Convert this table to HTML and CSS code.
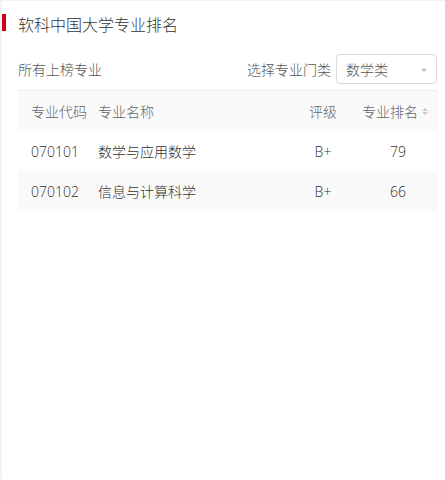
FILE: index.html
```html
<!DOCTYPE html>
<html lang="zh">
<head>
<meta charset="utf-8">
<link rel="stylesheet" href="styles.css">
</head>
<body>
<div class="card">
  <div class="title">软科中国大学专业排名</div>
  <div class="toolbar">
    <span class="all">所有上榜专业</span>
    <div class="filter">
      <span class="label">选择专业门类</span>
      <div class="select"><span>数学类</span><span class="arrow"></span></div>
    </div>
  </div>
  <div class="table">
    <div class="row head">
      <div class="c code">专业代码</div>
      <div class="c name">专业名称</div>
      <div class="c grade">评级</div>
      <div class="c rank">专业排名<span class="sort"><i class="up"></i><i class="down"></i></span></div>
    </div>
    <div class="row">
      <div class="c code">070101</div>
      <div class="c name">数学与应用数学</div>
      <div class="c grade">B+</div>
      <div class="c rank">79</div>
    </div>
    <div class="row alt">
      <div class="c code">070102</div>
      <div class="c name">信息与计算科学</div>
      <div class="c grade">B+</div>
      <div class="c rank">66</div>
    </div>
  </div>
</div>
</body>
</html>
```

FILE: styles.css
```css
html, body { margin: 0; padding: 0; }
body {
  background: #f3f3f3;
  font-family: "Open Sans", "Noto Sans CJK SC", sans-serif;
  font-weight: 300;
  color: #333;
  width: 445px;
  height: 480px;
  overflow: hidden;
}
.card {
  background: #fff;
  margin: 1px 0 0 2px;
  height: 479px;
  border-radius: 0 0 0 3px;
  padding: 0 8px 0 16px;
}
.title {
  position: relative;
  padding-top: 12px;
  height: 24px;
  line-height: 24px;
  font-size: 16px;
  color: #333;
}
.title::before {
  content: "";
  position: absolute;
  left: -16px;
  top: 13px;
  width: 4px;
  height: 17px;
  background: #d0021b;
}
.toolbar {
  margin-top: 16px;
  height: 32px;
  display: flex;
  align-items: center;
  justify-content: space-between;
  font-size: 14px;
  color: #555;
}
.filter { display: flex; align-items: center; gap: 5px; }
.select {
  border: 1px solid #d9d9d9;
  border-radius: 4px;
  display: flex;
  align-items: center;
  justify-content: space-between;
  padding: 0 9px 0 9px;
  box-sizing: border-box;
  width: 101px;
  height: 30px;
  color: #555;
}
.arrow {
  width: 0; height: 0;
  border-left: 3px solid transparent;
  border-right: 3px solid transparent;
  border-top: 3px solid #bbb;
  margin-top: 2px;
}
.table {
  margin-top: 5px;
  border-top: 1px solid #ececec;
  font-size: 14px;
}
.row {
  display: grid;
  grid-template-columns: 80px 1fr 60px 78px;
  height: 40px;
  align-items: center;
  color: #333;
}
.row.head { background: #fafafa; color: #666; }
.row.alt { background: #f9f9f9; }
.c.code { padding-left: 13px; }
.c.grade { text-align: center; padding-right: 12px; }
.c.rank { text-align: center; }
.row.head .c.rank { text-align: left; display: flex; align-items: center; padding-left: 3px; }
.sort {
  display: inline-flex;
  flex-direction: column;
  gap: 1px;
  margin-left: 4px;
}
.sort i {
  display: block;
  width: 0; height: 0;
  border-left: 3px solid transparent;
  border-right: 3px solid transparent;
}
.sort .up { border-bottom: 3px solid #ccc; }
.sort .down { border-top: 3px solid #ccc; }
```
